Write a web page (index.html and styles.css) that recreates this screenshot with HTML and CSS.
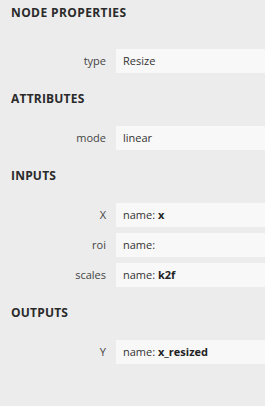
FILE: index.html
```html
<!DOCTYPE html>
<html lang="en">
<head>
  <meta charset="UTF-8" />
  <meta name="viewport" content="width=device-width, initial-scale=1.0" />
  <title>Node Properties</title>
  <link rel="stylesheet" href="styles.css">
</head>
<body>
  <div class="sidebar">
    <div class="title">NODE PROPERTIES</div>

    <div class="row">
      <div class="label">type</div>
      <div class="value">Resize</div>
    </div>

    <div class="section-header">ATTRIBUTES</div>
    <div class="row">
      <div class="label">mode</div>
      <div class="value">linear</div>
    </div>

    <div class="section-header">INPUTS</div>
    <div class="row">
      <div class="label">X</div>
      <div class="value">name: <b>x</b></div>
    </div>
    <div class="row">
      <div class="label">roi</div>
      <div class="value">name: </div>
    </div>
    <div class="row">
      <div class="label">scales</div>
      <div class="value">name: <b>k2f</b></div>
    </div>

    <div class="section-header">OUTPUTS</div>
    <div class="row">
      <div class="label">Y</div>
      <div class="value">name: <b>x_resized</b></div>
    </div>
  </div>
</body>
</html>
```

FILE: styles.css
```css
body {
  margin: 0;
  padding: 0;
  font-family: "Open Sans", sans-serif;
  background-color: #ececec;
  color: #333;
}

.sidebar {
  min-height: 406px;
}

.title {
  font-size: 12px;
  font-weight: bold;
  line-height: 16px;
  letter-spacing: 0.4px;
  color: #2a2a2a;
  padding: 5px 11px 28px;
}

.section-header {
  font-size: 12px;
  font-weight: bold;
  line-height: 16px;
  letter-spacing: 0.2px;
  color: #2a2a2a;
  padding: 12px 11px 19px;
}

.row {
  display: flex;
  height: 24px;
  margin-bottom: 6px;
  font-size: 11px;
}

.label {
  width: 106px;
  padding-right: 10px;
  text-align: right;
  line-height: 24px;
  color: #444;
}

.value {
  flex: 1;
  background-color: #f8f8f8;
  padding-left: 7px;
  line-height: 24px;
  color: #333;
}

.value b {
  color: #222;
}
```
